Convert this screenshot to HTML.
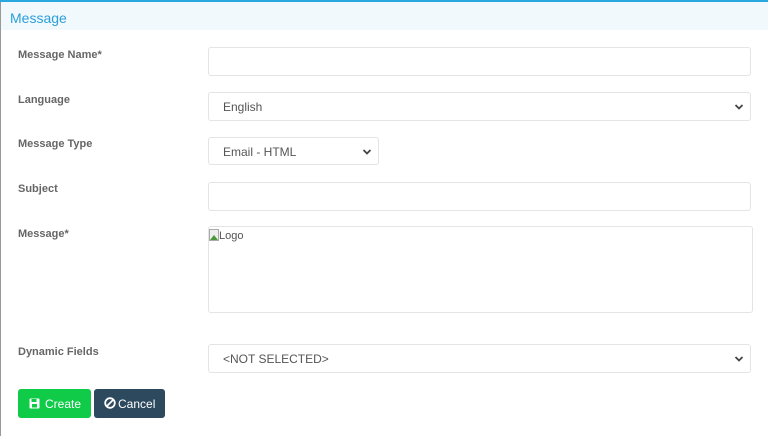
<!DOCTYPE html>
<html><head><style>
body{margin:0;width:768px;height:436px;overflow:hidden;background:#fff;font-family:"Liberation Sans",sans-serif;position:relative}
.top{position:absolute;left:0;top:0;width:768px;height:2px;background:#29a8e0}
.hdr{position:absolute;left:1px;top:2px;width:767px;height:28px;background:#f1f9fd}
.hdr span{position:absolute;left:9px;top:8px;font-size:14px;color:#2b9fd8}
.lb{position:absolute;left:0;top:2px;width:1px;height:434px;background:#999}
.lbl{position:absolute;left:18px;font-size:11px;font-weight:bold;color:#666}
.f{position:absolute;left:208px;width:543px;border:1px solid #e2e4e6;border-radius:3px;box-sizing:border-box;background:#fff;font-size:12px;color:#555}
.f span{position:absolute;left:14px;top:7px}
.chev{position:absolute;right:6px;top:10px;width:10px;height:8px}
.btn{position:absolute;top:389px;height:29px;border-radius:3px;color:#fff;font-size:12px;box-sizing:border-box}
</style></head><body>
<div class="top"></div><div class="hdr"><span>Message</span></div><div class="lb"></div>
<div class="lbl" style="top:49px">Message Name*</div>
<div class="f" style="top:47px;height:29px"></div>
<div class="lbl" style="top:94px">Language</div>
<div class="f" style="top:92px;height:29px"><span>English</span><svg class="chev" viewBox="0 0 10 8"><path d="M1.5 2l3.5 3.5 3.5-3.5" stroke="#444" stroke-width="1.8" fill="none"/></svg></div>
<div class="lbl" style="top:138px">Message Type</div>
<div class="f" style="top:137px;height:28px;width:171px"><span>Email - HTML</span><svg class="chev" viewBox="0 0 10 8"><path d="M1.5 2l3.5 3.5 3.5-3.5" stroke="#444" stroke-width="1.8" fill="none"/></svg></div>
<div class="lbl" style="top:183px">Subject</div>
<div class="f" style="top:182px;height:29px"></div>
<div class="lbl" style="top:228px">Message*</div>
<div class="f" style="top:226px;height:87px;width:545px"><span style="left:0;top:2px;font-size:11px"><svg width="10" height="12" viewBox="0 0 10 12" style="vertical-align:-2px"><rect x="0.5" y="0.5" width="9" height="11" fill="#eee" stroke="#aaa"/><path d="M1 11l4-5 4 5z" fill="#4a9a3a"/></svg>Logo</span></div>
<div class="lbl" style="top:346px">Dynamic Fields</div>
<div class="f" style="top:344px;height:29px"><span>&lt;NOT SELECTED&gt;</span><svg class="chev" viewBox="0 0 10 8"><path d="M1.5 2l3.5 3.5 3.5-3.5" stroke="#444" stroke-width="1.8" fill="none"/></svg></div>
<div class="btn" style="left:18px;width:73px;background:#0fcb47"><svg style="position:absolute;left:11px;top:9px" width="11" height="11" viewBox="0 0 11 11"><rect x="0.5" y="0.5" width="10" height="10" rx="1" fill="#fff"/><rect x="2.5" y="1" width="5" height="3" fill="#0fcb47"/><rect x="3" y="6" width="5" height="3.5" fill="#0fcb47"/></svg><span style="position:absolute;left:27px;top:8px">Create</span></div>
<div class="btn" style="left:94px;width:71px;background:#2c495e"><svg style="position:absolute;left:10px;top:8px" width="12" height="12" viewBox="0 0 12 12"><circle cx="6" cy="6" r="4.8" stroke="#fff" stroke-width="1.8" fill="none"/><path d="M3 9L9 3" stroke="#fff" stroke-width="1.8"/></svg><span style="position:absolute;left:24px;top:8px">Cancel</span></div>
</body></html>
